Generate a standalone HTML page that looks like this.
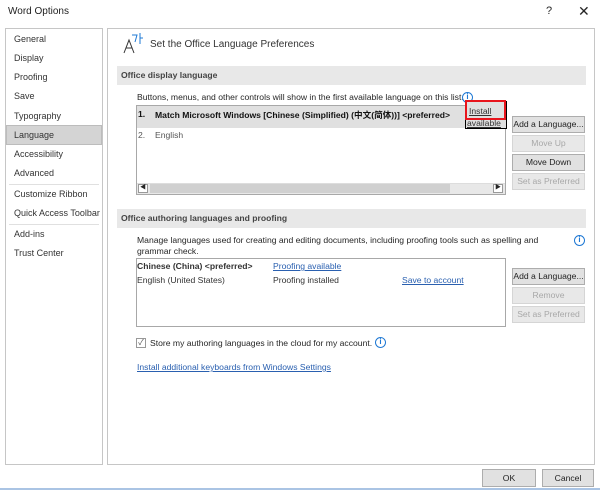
<!DOCTYPE html>
<html><head><meta charset="utf-8"><style>
*{box-sizing:border-box;margin:0;padding:0}
body{width:600px;height:490px;background:#fff;font-family:"Liberation Sans","Noto Sans CJK SC",sans-serif;font-size:8.6px;color:#262626;position:relative;overflow:hidden}
.a{position:absolute;white-space:nowrap}
.nav{position:absolute;left:5px;top:28px;width:98px;height:437px;border:1px solid #c6c6c6}
.nav div{position:absolute;left:8px;font-size:9px;color:#333;white-space:nowrap}
.sep{position:absolute;left:3px;width:90px;height:1px;background:#e0e0e0}
.panel{position:absolute;left:107px;top:28px;width:488px;height:437px;border:1px solid #c6c6c6}
.hdr{position:absolute;left:117px;width:469px;height:19px;background:#e8e8e8;font-weight:bold;padding:4px 0 0 4px;color:#444;font-size:8.6px}
.box{position:absolute;border:1px solid #a8a8a8;background:#fff}
.btn{position:absolute;left:512px;width:73px;height:17px;border:1px solid #adadad;background:#e1e1e1;text-align:center;line-height:15px;font-size:8.6px;color:#222;white-space:nowrap;overflow:hidden}
.dis{color:#a8a8a8;border-color:#d5d5d5;background:#e8e8e8}
.lnk{color:#2a60b0;text-decoration:underline}
.info{position:absolute;width:11px;height:11px;border:1.3px solid #1e78d4;border-radius:50%;color:#1e78d4;font-size:8px;line-height:8px;text-align:center;font-weight:bold}
</style></head><body>
<div class="a" style="left:8px;top:6px;font-size:10px;color:#222">Word Options</div>
<div class="a" style="left:546px;top:5px;font-size:11px">?</div>
<div class="a" style="left:578px;top:3px;font-size:14px">✕</div>

<div class="nav">
<div style="top:5px">General</div>
<div style="top:24px">Display</div>
<div style="top:43px">Proofing</div>
<div style="top:62px">Save</div>
<div style="top:82px">Typography</div>
<div style="top:96px;left:0;width:96px;height:20px;background:#d4d4d4;border:1px solid #bcbcbc"></div>
<div style="top:101px">Language</div>
<div style="top:120px">Accessibility</div>
<div style="top:139px">Advanced</div>
<span class="sep" style="top:155px"></span>
<div style="top:160px">Customize Ribbon</div>
<div style="top:179px">Quick Access Toolbar</div>
<span class="sep" style="top:195px"></span>
<div style="top:200px">Add-ins</div>
<div style="top:219px">Trust Center</div>
</div>

<div class="panel"></div>
<svg class="a" style="left:123px;top:31px" width="22" height="24" viewBox="0 0 22 24">
<path d="M1 22 L6 9 L11 22 M3 17 H9" stroke="#333" stroke-width="1" fill="none"/>
<path d="M9 4 H14 L12 11 M17 2 V13 M17 7 H20" stroke="#1e78d4" stroke-width="1" fill="none"/>
</svg>
<div class="a" style="left:150px;top:39px;font-size:10px;color:#333">Set the Office Language Preferences</div>

<div class="hdr" style="top:66px">Office display language</div>
<div class="a" style="left:137px;top:92px">Buttons, menus, and other controls will show in the first available language on this list.</div>
<div class="info" style="left:462px;top:92px">i</div>
<div class="box" style="left:136px;top:105px;width:370px;height:90px"></div>
<div class="a" style="left:137px;top:106px;width:368px;height:22px;background:#e0e0e0"></div>
<div class="a" style="left:138px;top:109px;font-weight:bold;color:#111">1.</div>
<div class="a" style="left:155px;top:109px;font-weight:bold;color:#111">Match Microsoft Windows [Chinese (Simplified) (中文(简体))] &lt;preferred&gt;</div>
<div class="a" style="left:465px;top:101px;width:42px;height:28px;border:1px solid #000;background:#e0e0e0"></div>
<div class="a" style="left:465px;top:100px;width:41px;height:20px;border:2px solid #e8141c"></div>
<div class="a" style="left:469px;top:106px;color:#333;text-decoration:underline">Install</div>
<div class="a" style="left:467px;top:118px;color:#333;text-decoration:underline">available</div>
<div class="a" style="left:138px;top:130px;color:#555">2.</div>
<div class="a" style="left:155px;top:130px;color:#555">English</div>
<div class="a" style="left:137px;top:183px;width:368px;height:11px;background:#e8e8e8;border-top:1px solid #ddd"></div>
<div class="a" style="left:138px;top:184px;width:10px;height:9px;border:1px solid #999;background:#fff;font-size:6px;line-height:7px;text-align:center">◀</div>
<div class="a" style="left:150px;top:184px;width:300px;height:9px;background:#d0d0d0"></div>
<div class="a" style="left:493px;top:184px;width:10px;height:9px;border:1px solid #999;background:#fff;font-size:6px;line-height:7px;text-align:center">▶</div>
<div class="btn" style="top:116px">Add a Language...</div>
<div class="btn dis" style="top:135px">Move Up</div>
<div class="btn" style="top:154px">Move Down</div>
<div class="btn dis" style="top:173px">Set as Preferred</div>

<div class="hdr" style="top:209px">Office authoring languages and proofing</div>
<div class="a" style="left:137px;top:235px;line-height:11px">Manage languages used for creating and editing documents, including proofing tools such as spelling and<br>grammar check.</div>
<div class="info" style="left:574px;top:235px">i</div>
<div class="box" style="left:136px;top:258px;width:370px;height:69px"></div>
<div class="a" style="left:137px;top:261px;font-weight:bold;color:#333">Chinese (China) &lt;preferred&gt;</div>
<div class="a lnk" style="left:273px;top:261px">Proofing available</div>
<div class="a" style="left:137px;top:275px;color:#333">English (United States)</div>
<div class="a" style="left:273px;top:275px;color:#333">Proofing installed</div>
<div class="a lnk" style="left:402px;top:275px">Save to account</div>
<div class="btn" style="top:268px">Add a Language...</div>
<div class="btn dis" style="top:287px">Remove</div>
<div class="btn dis" style="top:306px">Set as Preferred</div>
<div class="a" style="left:136px;top:338px;width:10px;height:10px;border:1px solid #999;font-size:8px;line-height:8px;text-align:center;color:#555">✓</div>
<div class="a" style="left:150px;top:338px">Store my authoring languages in the cloud for my account.</div>
<div class="info" style="left:375px;top:337px">i</div>
<div class="a lnk" style="left:137px;top:362px">Install additional keyboards from Windows Settings</div>

<div class="btn" style="left:482px;top:469px;width:54px;height:18px;line-height:16px">OK</div>
<div class="btn" style="left:542px;top:469px;width:52px;height:18px;line-height:16px">Cancel</div>
<div class="a" style="left:0;top:488px;width:600px;height:2px;background:#aac4e4"></div>
</body></html>
